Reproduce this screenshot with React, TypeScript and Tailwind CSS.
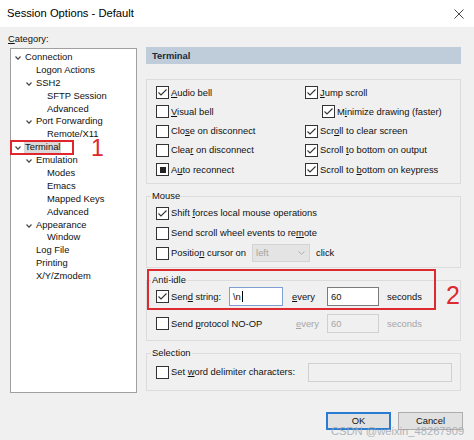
import React from "react";

type Check = boolean | "mixed";

const tree: { label: string; level: number; chevron?: boolean }[] = [
  { label: "Connection", level: 0, chevron: true },
  { label: "Logon Actions", level: 1 },
  { label: "SSH2", level: 1, chevron: true },
  { label: "SFTP Session", level: 2 },
  { label: "Advanced", level: 2 },
  { label: "Port Forwarding", level: 1, chevron: true },
  { label: "Remote/X11", level: 2 },
  { label: "Terminal", level: 0, chevron: true },
  { label: "Emulation", level: 1, chevron: true },
  { label: "Modes", level: 2 },
  { label: "Emacs", level: 2 },
  { label: "Mapped Keys", level: 2 },
  { label: "Advanced", level: 2 },
  { label: "Appearance", level: 1, chevron: true },
  { label: "Window", level: 2 },
  { label: "Log File", level: 1 },
  { label: "Printing", level: 1 },
  { label: "X/Y/Zmodem", level: 1 },
];

// label with an access key: [before, key, after]
function Label({ parts }: { parts: [string, string, string] }) {
  return (
    <span className="whitespace-nowrap">
      {parts[0]}
      <u className="underline-offset-1">{parts[1]}</u>
      {parts[2]}
    </span>
  );
}

function Box({ checked }: { checked: Check }) {
  return (
    <span className="flex h-[13px] w-[13px] shrink-0 items-center justify-center border border-[#333333] bg-white">
      {checked === true && (
        <svg width="11" height="11" viewBox="0 0 11 11">
          <polyline points="1.5,5.5 4,8 9.5,2.5" fill="none" stroke="#333333" strokeWidth="1.1" />
        </svg>
      )}
      {checked === "mixed" && <span className="h-[6px] w-[6px] bg-[#222222]" />}
    </span>
  );
}

function CheckRow({ checked, parts, className = "" }: { checked: Check; parts: [string, string, string]; className?: string }) {
  return (
    <div className={`flex items-center gap-[2px] ${className}`}>
      <Box checked={checked} />
      <Label parts={parts} />
    </div>
  );
}

function Chevron() {
  return (
    <svg width="6" height="4" viewBox="0 0 6 4" className="mt-[1px]">
      <polyline points="0.5,0.5 3,3.2 5.5,0.5" fill="none" stroke="#4a4a4a" strokeWidth="1.2" />
    </svg>
  );
}

function Group({ legend, children, className = "" }: { legend: string; children: React.ReactNode; className?: string }) {
  return (
    <fieldset className={`w-full border border-[#dcdcdc] ${className}`}>
      <legend className="ml-[4px] px-[1px] leading-[12px]">{legend}</legend>
      {children}
    </fieldset>
  );
}

export default function App() {
  return (
    <div className="relative h-[440px] w-[474px] overflow-hidden bg-[#f0f0f0] font-['Liberation_Sans',Arial,sans-serif] text-[9.4px] text-[#111111]">
      {/* title bar */}
      <div className="flex h-[27px] items-center justify-between bg-white pl-[7px] pr-[10px]">
        <span className="text-[11.2px] text-black">Session Options - Default</span>
        <svg width="10" height="10" viewBox="0 0 10 10">
          <path d="M0.5 0.5 L9.5 9.5 M9.5 0.5 L0.5 9.5" stroke="#333333" strokeWidth="0.9" />
        </svg>
      </div>

      <div className="flex">
        {/* category tree */}
        <div className="w-[146px] shrink-0 pl-[8px] pt-[6px]">
          <div className="leading-[12px]">
            <Label parts={["", "C", "ategory:"]} />
          </div>
          <div className="ml-[2px] mt-[3px] h-[345px] w-[127px] border border-[#a0a0a0] bg-white pt-[2px]">
            {tree.map((t, i) => (
              <div
                key={i}
                className="relative flex h-[12.9px] items-center leading-[12.9px]"
                style={{ paddingLeft: 4 + 11 * t.level }}
              >
                <span className="flex w-[10px] shrink-0 items-center">{t.chevron && <Chevron />}</span>
                {t.label === "Terminal" ? (
                  <>
                    <span className="-ml-[1px] bg-[#d9d9d9] px-[1px]">{t.label}</span>
                    <span className="absolute left-[-1px] top-[-1px] h-[15px] w-[64px] border-2 border-[#e0262c]" />
                    <span className="absolute left-[80px] top-[-5px] text-[23px] leading-[24px] text-[#e0262c]">1</span>
                  </>
                ) : (
                  <span>{t.label}</span>
                )}
              </div>
            ))}
          </div>
        </div>

        {/* right panel */}
        <div className="w-[315px] shrink-0 pt-[20px]">
          <div className="h-[17px] bg-[#bfcddb] pl-[6px] font-bold leading-[17px] text-[#1b2837]">Terminal</div>

          <div className="mt-[15px] grid grid-cols-[149px_1fr] border border-[#dcdcdc] pb-[4px] pl-[9px] pt-[3px]">
            <div>
              <CheckRow className="h-[19.3px]" checked parts={["", "A", "udio bell"]} />
              <CheckRow className="h-[19.3px]" checked={false} parts={["", "V", "isual bell"]} />
              <CheckRow className="h-[19.3px]" checked={false} parts={["Clo", "s", "e on disconnect"]} />
              <CheckRow className="h-[19.3px]" checked={false} parts={["Clea", "r", " on disconnect"]} />
              <CheckRow className="h-[19.3px]" checked="mixed" parts={["A", "u", "to reconnect"]} />
            </div>
            <div>
              <CheckRow className="h-[19.3px]" checked parts={["", "J", "ump scroll"]} />
              <CheckRow className="h-[19.3px] pl-[17px]" checked parts={["M", "i", "nimize drawing (faster)"]} />
              <CheckRow className="h-[19.3px]" checked parts={["Scr", "o", "ll to clear screen"]} />
              <CheckRow className="h-[19.3px]" checked parts={["Scroll ", "t", "o bottom on output"]} />
              <CheckRow className="h-[19.3px]" checked parts={["Scroll to ", "b", "ottom on keypress"]} />
            </div>
          </div>

          <Group legend="Mouse" className="mt-[6px]">
            <div className="pb-[4px] pl-[9px] pt-[1px]">
              <CheckRow className="h-[20px]" checked parts={["Shift ", "f", "orces local mouse operations"]} />
              <CheckRow className="h-[20px]" checked={false} parts={["Send scroll wheel events to re", "m", "ote"]} />
              <div className="flex h-[20px] items-center">
                <CheckRow checked={false} parts={["Positio", "n", " cursor on"]} />
                <div className="ml-[6px] flex h-[18px] w-[58px] items-center justify-between border border-[#d4d4d4] bg-[#e4e4e4] pl-[3px] pr-[4px] text-[#a3a3a3]">
                  <span>left</span>
                  <svg width="7" height="4" viewBox="0 0 7 4">
                    <polyline points="0.5,0.5 3.5,3.3 6.5,0.5" fill="none" stroke="#b0b0b0" strokeWidth="1" />
                  </svg>
                </div>
                <span className="ml-[6px]">click</span>
              </div>
            </div>
          </Group>

          <div className="relative mt-[6px]">
            <Group legend="Anti-idle">
              <div className="flex flex-col gap-[6px] pb-[6px] pl-[9px]">
                <div className="flex h-[21px] items-center">
                  <div className="w-[73px]">
                    <CheckRow checked parts={["Sen", "d", " string:"]} />
                  </div>
                  <div className="flex h-[19px] w-[54px] items-center border border-[#7f9fd4] bg-white pl-[3px]">
                    <span>\n</span>
                    <span className="ml-[1px] h-[11px] w-px bg-black" />
                  </div>
                  <span className="ml-[9px] w-[35px]">
                    <Label parts={["", "e", "very"]} />
                  </span>
                  <div className="flex h-[19px] w-[52px] items-center border border-[#7a7a7a] bg-white pl-[3px]">60</div>
                  <span className="ml-[8px]">seconds</span>
                </div>
                <div className="flex h-[21px] items-center">
                  <div className="w-[140px]">
                    <CheckRow checked={false} parts={["Send ", "p", "rotocol NO-OP"]} />
                  </div>
                  <span className="w-[31px] text-[#a6a6a6]">
                    <Label parts={["", "e", "very"]} />
                  </span>
                  <div className="flex h-[19px] w-[52px] items-center border border-[#d0d0d0] bg-[#f0f0f0] pl-[3px] text-[#a6a6a6]">60</div>
                  <span className="ml-[8px] text-[#a6a6a6]">seconds</span>
                </div>
              </div>
            </Group>
            <span className="absolute left-[1px] top-[-5px] h-[41px] w-[289px] border-2 border-[#dc2a30]" />
            <span className="absolute left-[300px] top-[9px] text-[25px] leading-[25px] text-[#dc2a30]">2</span>
          </div>

          <Group legend="Selection" className="mt-[6px]">
            <div className="mb-[8px] mt-[3px] flex h-[20px] items-center pl-[9px]">
              <div className="w-[152px]">
                <CheckRow checked={false} parts={["Set ", "w", "ord delimiter characters:"]} />
              </div>
              <div className="h-[19px] w-[144px] border border-[#d0d0d0] bg-[#f0f0f0]" />
            </div>
          </Group>
        </div>
      </div>

      {/* buttons */}
      <div className="mt-[19px] flex justify-end gap-[7px] pr-[11px]">
        <button className="h-[18px] w-[65px] border-2 border-[#2a7bd3] bg-[#e1e1e1] leading-[14px]">OK</button>
        <button className="h-[18px] w-[65px] border border-[#adadad] bg-[#e1e1e1] leading-[16px]">Cancel</button>
      </div>

      <span className="absolute left-[331px] top-[424px] text-[11.2px] leading-[14px] text-[#9ea6ae] opacity-80">
        CSDN @weixin_48267909
      </span>
    </div>
  );
}
